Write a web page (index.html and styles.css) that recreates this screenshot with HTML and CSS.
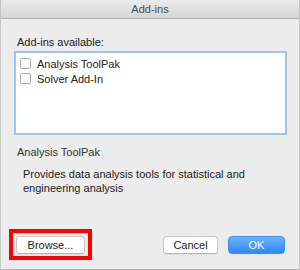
FILE: index.html
```html
<!DOCTYPE html>
<html lang="en">

<head>
    <meta charset="UTF-8">
    <meta name="viewport" content="width=device-width, initial-scale=1.0">
    <title>Add-ins</title>
    <link rel="stylesheet" href="styles.css">
</head>

<body>
    <div class="window">
        <div class="titlebar">Add-ins</div>

        <div class="content">
            <p class="label">Add-ins available:</p>

            <!-- list of add-ins -->
            <div class="list">
                <div class="item"><span class="check"></span>Analysis ToolPak</div>
                <div class="item"><span class="check"></span>Solver Add-In</div>
            </div>

            <p class="name">Analysis ToolPak</p>
            <p class="desc">Provides data analysis tools for statistical and engineering analysis</p>

            <div class="buttons">
                <div class="highlight">
                    <button class="btn">Browse...</button>
                </div>
                <div class="right">
                    <button class="btn">Cancel</button>
                    <button class="btn ok">OK</button>
                </div>
            </div>
        </div>
    </div>
</body>

</html>
```

FILE: styles.css
```css
* {
    padding: 0;
    margin: 0;
    box-sizing: border-box;
    font-family: 'Liberation Sans', Arial, sans-serif;
}

body {
    background-color: #ececec;
    width: 300px;
    height: 270px;
}

.window {
    width: 300px;
    height: 270px;
    background-color: #ececec;
    border-left: 1px solid #c4c4c4;
    border-right: 1px solid #c4c4c4;
    border-bottom: 1px solid #b8b8b8;
    display: flex;
    flex-direction: column;
}

.titlebar {
    height: 19px;
    line-height: 18px;
    text-align: center;
    font-size: 11px;
    color: #4d4d4d;
    background: linear-gradient(#ebebeb, #d5d5d5);
    border-bottom: 1px solid #b3b3b3;
}

.content {
    padding: 16px 12px 0 13px;
    display: flex;
    flex-direction: column;
    flex: 1;
}

.label {
    font-size: 11px;
    line-height: 14px;
    color: #222;
    padding-left: 3px;
}

.list {
    margin-top: 2px;
    height: 84px;
    background-color: #fff;
    border: 2px solid #9dc3f1;
    padding: 3px 0 0 4px;
}

.item {
    height: 15px;
    display: flex;
    align-items: center;
    font-size: 11px;
    color: #222;
}

.check {
    width: 11px;
    height: 11px;
    margin-right: 6px;
    border: 1px solid #ababab;
    border-radius: 2px;
    background-color: #fff;
}

.name {
    margin-top: 10px;
    font-size: 11px;
    line-height: 14px;
    color: #333;
    padding-left: 3px;
}

.desc {
    margin-top: 8px;
    padding-left: 9px;
    font-size: 11px;
    line-height: 14px;
    color: #222;
}

.buttons {
    margin-top: auto;
    margin-bottom: 9px;
    display: flex;
    justify-content: space-between;
    align-items: center;
}

.highlight {
    margin-left: -5px;
    border: 4px solid #f00;
    padding: 2px 3px;
}

.right {
    display: flex;
    gap: 10px;
    margin-right: 2px;
}

.btn {
    height: 18px;
    width: 55px;
    font-size: 11px;
    color: #222;
    background-color: #fff;
    border: 1px solid #c8c8c8;
    border-bottom-color: #b4b4b4;
    border-radius: 4px;
    box-shadow: 0px 1px 1px rgba(0, 0, 0, 0.05);
}

.highlight .btn {
    width: 69px;
}

.btn.ok {
    width: 57px;
    color: #fff;
    border-color: #3f8ef6;
    background: linear-gradient(#6cb2fb, #2f86f6);
}
```
